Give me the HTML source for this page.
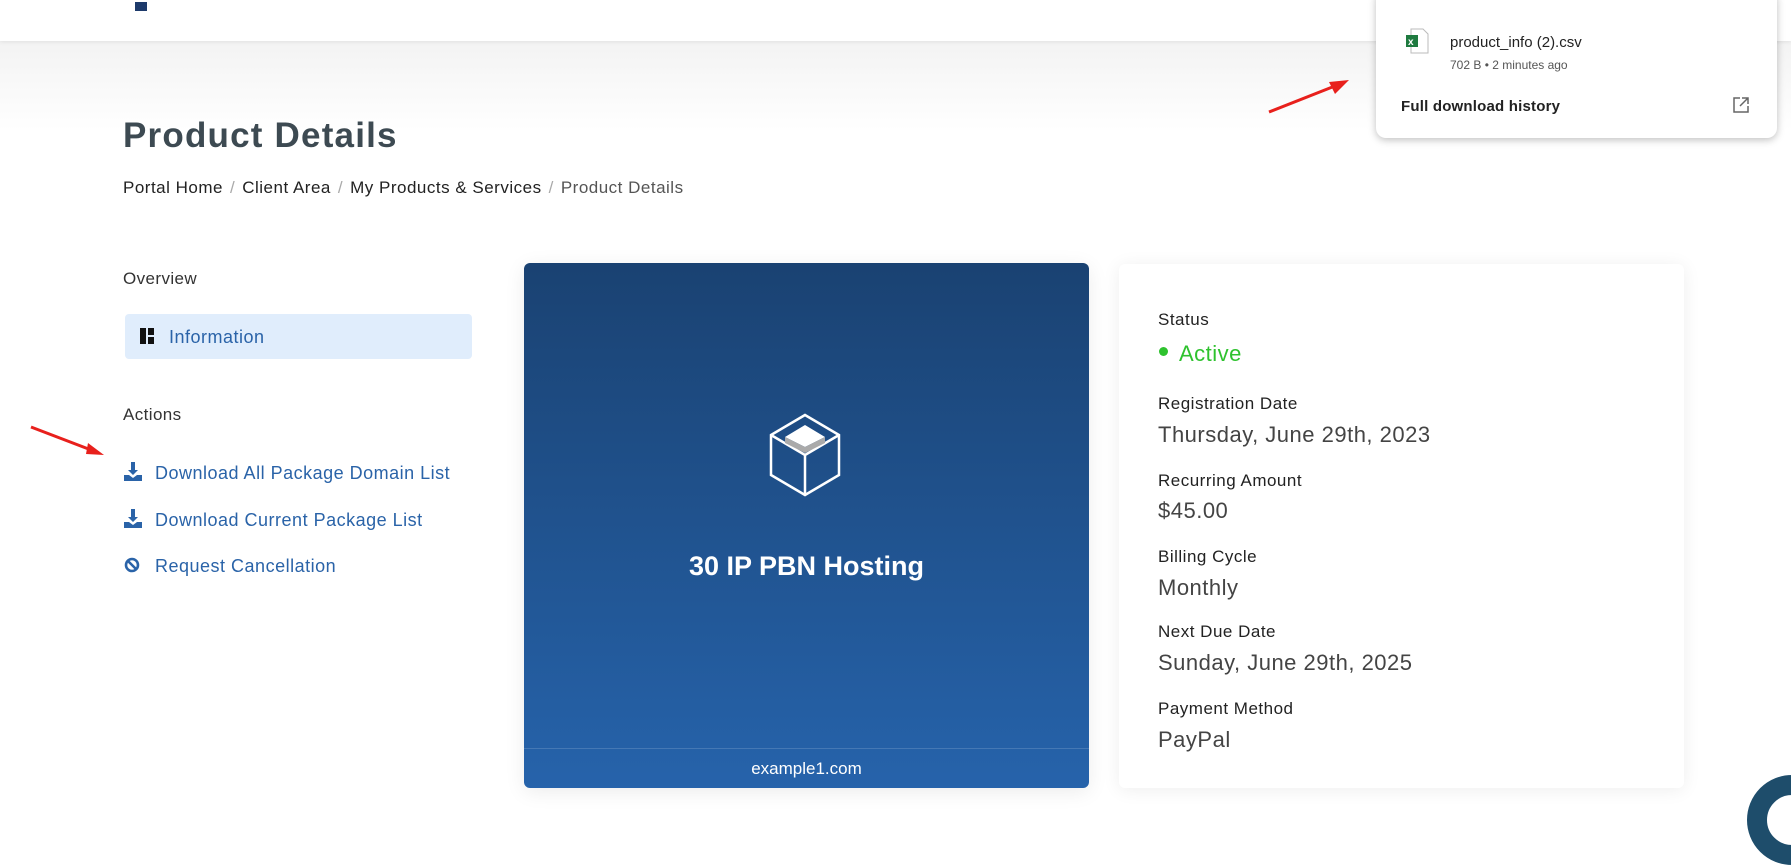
<!DOCTYPE html>
<html><head><meta charset="utf-8"><style>
*{margin:0;padding:0;box-sizing:border-box}
body{width:1791px;height:818px;overflow:hidden;background:#fff;font-family:"Liberation Sans",sans-serif;position:relative;color:#333}
.hdr{position:absolute;left:0;top:0;width:1791px;height:41px;background:#fff;box-shadow:0 1px 4px rgba(0,0,0,.08);z-index:2}
.grad{position:absolute;left:0;top:41px;width:1791px;height:90px;background:linear-gradient(#f3f3f3,#fff)}
.a{position:absolute;white-space:nowrap}
h1{position:absolute;left:123px;top:116px;font-size:35px;font-weight:bold;color:#3d4a52;letter-spacing:1.2px}
.bc{left:123px;top:178px;font-size:17px;color:#222;letter-spacing:.5px}
.bc .s{color:#aaa;margin:0 7px}
.bc .l{color:#555}
.sec{font-size:17px;color:#333;letter-spacing:.4px}
.info{position:absolute;left:125px;top:314px;width:347px;height:45px;background:#e0edfc;border-radius:4px}
.lk{font-size:18px;color:#2a63a8;letter-spacing:.5px}
.card{position:absolute;left:524px;top:263px;width:565px;height:525px;border-radius:6px;background:linear-gradient(#1a4272,#2663ab);overflow:hidden;box-shadow:0 4px 20px rgba(0,0,0,.08)}
.card .ft{position:absolute;left:0;bottom:0;width:100%;height:40px;border-top:1px solid rgba(255,255,255,.15);color:#fff;text-align:center;font-size:17px;line-height:40px}
.rc{position:absolute;left:1119px;top:264px;width:565px;height:524px;background:#fff;border-radius:6px;box-shadow:0 2px 18px rgba(0,0,0,.07)}
.lb{left:1158px;font-size:17px;color:#222;letter-spacing:.5px}
.vl{left:1158px;font-size:22px;color:#444;letter-spacing:.5px}
.pop{position:absolute;left:1376px;top:-10px;width:401px;height:148px;background:#fff;border-radius:10px;box-shadow:0 2px 8px rgba(0,0,0,.25);z-index:3}
</style></head><body>
<div class="hdr"><div class="a" style="left:135px;top:2px;width:12px;height:9px;background:#1d3a6b"></div></div>
<div class="grad"></div>
<h1>Product Details</h1>
<div class="a bc">Portal Home<span class="s">/</span>Client Area<span class="s">/</span>My Products &amp; Services<span class="s">/</span><span class="l">Product Details</span></div>
<div class="a sec" style="left:123px;top:269px">Overview</div>
<div class="info"></div>
<div class="a" style="left:140px;top:328px;width:6px;height:16px;background:#111"></div>
<div class="a" style="left:148px;top:328px;width:6px;height:7px;background:#111"></div>
<div class="a" style="left:148px;top:337px;width:6px;height:7px;background:#111"></div>
<div class="a lk" style="left:169px;top:327px">Information</div>
<div class="a sec" style="left:123px;top:405px">Actions</div>
<svg class="a" style="left:124px;top:462px" width="18" height="19" viewBox="0 0 18 19"><path d="M7 0h4v8h3l-5 5-5-5h3z" fill="#2a63a8"/><path d="M0 13h5l4 3 4-3h5v6H0z" fill="#2a63a8"/></svg>
<div class="a lk" style="left:155px;top:463px">Download All Package Domain List</div>
<svg class="a" style="left:124px;top:509px" width="18" height="19" viewBox="0 0 18 19"><path d="M7 0h4v8h3l-5 5-5-5h3z" fill="#2a63a8"/><path d="M0 13h5l4 3 4-3h5v6H0z" fill="#2a63a8"/></svg>
<div class="a lk" style="left:155px;top:510px">Download Current Package List</div>
<svg class="a" style="left:124px;top:557px" width="16" height="16" viewBox="0 0 16 16"><circle cx="8" cy="8" r="6" fill="none" stroke="#2a63a8" stroke-width="2.6"/><path d="M4 4l8 8" stroke="#2a63a8" stroke-width="2.6"/></svg>
<div class="a lk" style="left:155px;top:556px">Request Cancellation</div>
<svg class="a" style="left:24px;top:420px" width="85" height="40"><path d="M7 7L75 33" stroke="#e8201c" stroke-width="3"/><path d="M80 35L64 23L62 34Z" fill="#e8201c"/></svg>
<div class="card">
<svg style="position:absolute;left:245px;top:150px" width="72" height="84" viewBox="0 0 72 84"><path d="M36 2L70 22V62L36 82L2 62V22Z M2 22L36 42L70 22 M36 42V82" fill="none" stroke="#fff" stroke-width="2.5"/><path d="M36 12L56 24L36 34L16 24Z" fill="#fff"/><path d="M16 24L36 34L56 24V30L36 40L16 30Z" fill="#aaa"/></svg>
<div style="position:absolute;left:0;width:100%;top:288px;text-align:center;color:#fff;font-size:27px;font-weight:bold">30 IP PBN Hosting</div>
<div class="ft">example1.com</div>
</div>
<div class="rc"></div>
<div class="a lb" style="top:310px">Status</div>
<div class="a" style="left:1159px;top:347px;width:9px;height:9px;border-radius:50%;background:#2ec22e"></div>
<div class="a" style="left:1179px;top:341px;font-size:22px;color:#2ec22e;letter-spacing:.5px">Active</div>
<div class="a lb" style="top:394px">Registration Date</div>
<div class="a vl" style="top:422px">Thursday, June 29th, 2023</div>
<div class="a lb" style="top:471px">Recurring Amount</div>
<div class="a vl" style="top:498px">$45.00</div>
<div class="a lb" style="top:547px">Billing Cycle</div>
<div class="a vl" style="top:575px">Monthly</div>
<div class="a lb" style="top:622px">Next Due Date</div>
<div class="a vl" style="top:650px">Sunday, June 29th, 2025</div>
<div class="a lb" style="top:699px">Payment Method</div>
<div class="a vl" style="top:727px">PayPal</div>
<div class="pop">
<svg style="position:absolute;left:29px;top:38px" width="24" height="26"><path d="M6 1h12l5 5v19H6z" fill="#fff" stroke="#bbb"/><rect x="1" y="7" width="12" height="12" fill="#1e7a3f"/><text x="3" y="17" font-size="10" fill="#fff" font-family="Liberation Sans" font-weight="bold">x</text></svg>
<div class="a" style="left:74px;top:44px;font-size:15px;color:#222">product_info (2).csv</div>
<div class="a" style="left:74px;top:68px;font-size:12px;color:#555">702 B • 2 minutes ago</div>
<div class="a" style="left:25px;top:108px;font-size:15px;color:#222;font-weight:bold;letter-spacing:.2px">Full download history</div>
<svg style="position:absolute;left:357px;top:107px" width="16" height="16" viewBox="0 0 16 16"><path d="M7 1H1v14h14V9 M9 1h6v6 M15 1L7 9" fill="none" stroke="#666" stroke-width="1.5"/></svg>
</div>
<svg class="a" style="left:1265px;top:70px;z-index:4" width="90" height="48"><path d="M4 42L75 14" stroke="#e8201c" stroke-width="3"/><path d="M84 10L64 12L70 24Z" fill="#e8201c"/></svg>
<div class="a" style="left:1747px;top:775px;width:90px;height:90px;border-radius:50%;border:20px solid #1e4d6b"></div>
</body></html>
